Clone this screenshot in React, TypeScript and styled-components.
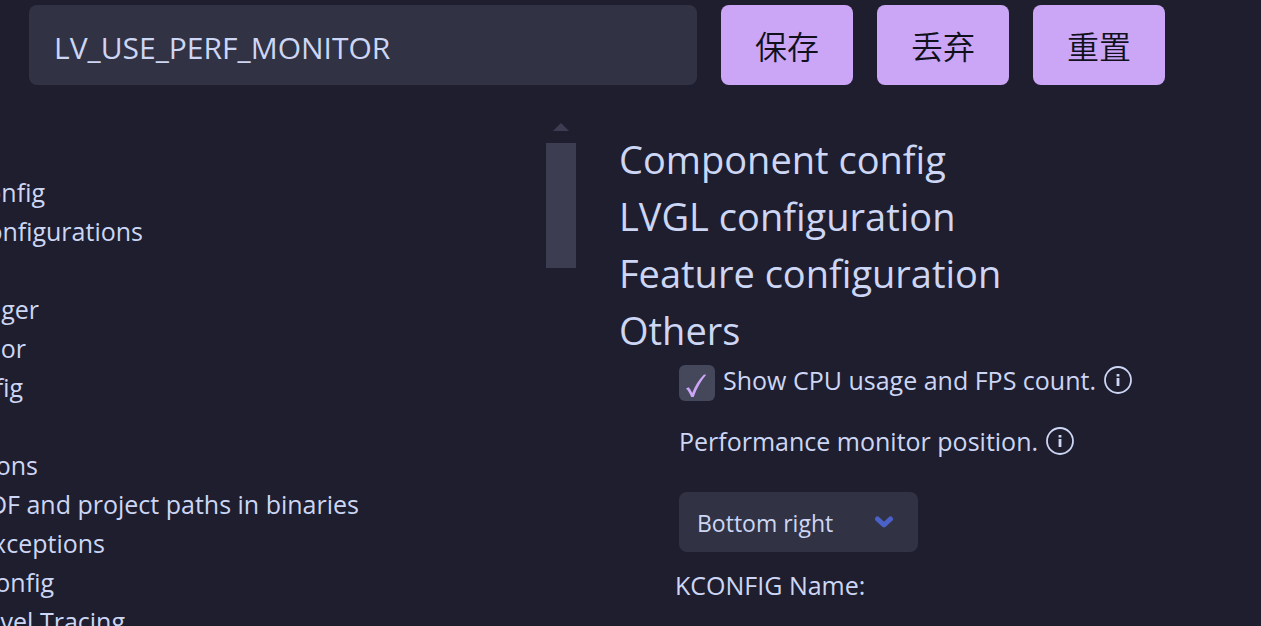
import React from "react";
import styled, { createGlobalStyle } from "styled-components";

const GlobalStyle = createGlobalStyle`
  * { box-sizing: border-box; }
  body {
    margin: 0;
    overflow: hidden;
    background: #1e1e2e;
    color: #cdd6f4;
    font-family: "Open Sans", "Noto Sans CJK SC", sans-serif;
    font-size: 25px;
    line-height: 39px;
  }
`;

const Page = styled.div`
  display: flex;
  flex-direction: column;
  height: 100vh;
`;

const Toolbar = styled.header`
  display: flex;
  gap: 24px;
  padding: 5px 96px 0 29px;
`;

const SearchInput = styled.input`
  flex: 1;
  min-width: 0;
  height: 80px;
  padding: 4px 24px 0 25px;
  border: 0;
  border-radius: 8px;
  outline: 0;
  background: #313244;
  color: inherit;
  font-family: inherit;
  font-size: 30px;
`;

const ActionButton = styled.button`
  width: 132px;
  height: 80px;
  padding: 0;
  border: 0;
  border-radius: 8px;
  background: #cba6f7;
  color: #11111b;
  font-family: "Noto Sans CJK SC", sans-serif;
  font-size: 32px;
  font-weight: 350;
`;

const Body = styled.div`
  display: flex;
  flex: 1;
  min-height: 0;
  padding-top: 32px;
`;

const Sidebar = styled.aside`
  display: flex;
  flex: 0 0 576px;
  min-height: 0;
  overflow: hidden;
`;

const Tree = styled.ul`
  flex: 1;
  min-width: 0;
  margin: 0;
  padding: 56px 0 0;
  list-style: none;
  white-space: nowrap;
`;

const TreeItem = styled.li<{ $reach: number }>`
  display: flex;
  justify-content: flex-end;
  width: ${(p) => p.$reach}px;
  height: 39px;
`;

const ScrollTrack = styled.div`
  display: flex;
  flex-direction: column;
  align-items: center;
  gap: 12px;
  width: 30px;
  padding-top: 6px;
`;

const ScrollArrow = styled.svg`
  display: block;
  width: 16px;
  height: 8px;
  fill: #3d3d51;
`;

const ScrollThumb = styled.div`
  width: 100%;
  height: 125px;
  background: #3d3d51;
`;

const Content = styled.main`
  flex: 1;
  min-width: 0;
  padding: 14px 0 0 43px;
`;

const Heading = styled.h2`
  margin: 0;
  font-size: 38px;
  font-weight: 400;
  line-height: 57px;
  white-space: nowrap;
`;

const Settings = styled.div`
  padding: 6px 0 0 60px;
`;

const OptionRow = styled.div`
  display: flex;
  align-items: flex-start;
  height: 61px;
  white-space: nowrap;
`;

const OptionLabel = styled.label`
  line-height: 30px;
`;

const CheckWrap = styled.span`
  display: grid;
  width: 36px;
  height: 36px;
  margin-right: 8px;

  > * { grid-area: 1 / 1; }
`;

const Checkbox = styled.input`
  width: 36px;
  height: 36px;
  margin: 0;
  appearance: none;
  border-radius: 6px;
  background: #45475a;
`;

const CheckMark = styled.svg`
  z-index: 1;
  width: 36px;
  height: 36px;
  fill: #cba6f7;
  pointer-events: none;

  input:not(:checked) + & { visibility: hidden; }
`;

const InfoButton = styled.button`
  display: flex;
  margin: 0 0 0 7px;
  padding: 0;
  border: 0;
  background: none;
  color: inherit;
`;

const SelectWrap = styled.div`
  display: grid;
  align-items: center;
  width: 239px;
  margin-top: 5px;

  > * { grid-area: 1 / 1; }
`;

const Select = styled.select`
  width: 100%;
  height: 60px;
  padding: 2px 18px 0;
  appearance: none;
  border: 0;
  border-radius: 8px;
  background: #313244;
  color: inherit;
  font-family: inherit;
  font-size: 23px;
`;

const Chevron = styled.svg`
  justify-self: end;
  width: 20px;
  height: 14px;
  margin-right: 24px;
  fill: none;
  stroke: #4a62c8;
  stroke-width: 5;
  stroke-linecap: round;
  stroke-linejoin: round;
  pointer-events: none;
`;

const KconfigName = styled.p`
  margin: 14px 0 0 -4px;
`;

const treeItems = [
  { label: "onfig", reach: 45 },
  { label: "onfigurations", reach: 143 },
  { label: "", reach: 0 },
  { label: "ger", reach: 39 },
  { label: "ior", reach: 26 },
  { label: "fig", reach: 23 },
  { label: "", reach: 0 },
  { label: "ons", reach: 38 },
  { label: "DF and project paths in binaries", reach: 359 },
  { label: "xceptions", reach: 105 },
  { label: "onfig", reach: 54 },
  { label: "evel Tracing", reach: 125 },
];

const headings = ["Component config", "LVGL configuration", "Feature configuration", "Others"];

function Info() {
  return (
    <InfoButton type="button" aria-label="Help">
      <svg width="30" height="30" viewBox="0 0 30 30" fill="none">
        <circle cx="15" cy="15" r="13" stroke="currentColor" strokeWidth="1.8" />
        <path d="M13.6 9h2.8v2.4h-2.8zM13.6 13h2.8v8h-2.8z" fill="currentColor" />
      </svg>
    </InfoButton>
  );
}

export default function App() {
  return (
    <Page>
      <GlobalStyle />
      <Toolbar>
        <SearchInput aria-label="Search" defaultValue="LV_USE_PERF_MONITOR" />
        <ActionButton type="button">保存</ActionButton>
        <ActionButton type="button">丢弃</ActionButton>
        <ActionButton type="button">重置</ActionButton>
      </Toolbar>
      <Body>
        <Sidebar>
          <Tree>
            {treeItems.map((item, i) => (
              <TreeItem key={i} $reach={item.reach}>{item.label}</TreeItem>
            ))}
          </Tree>
          <ScrollTrack>
            <ScrollArrow viewBox="0 0 16 8"><path d="M8 0l8 8H0z" /></ScrollArrow>
            <ScrollThumb />
          </ScrollTrack>
        </Sidebar>
        <Content>
          {headings.map((text) => <Heading key={text}>{text}</Heading>)}
          <Settings>
            <OptionRow>
              <CheckWrap>
                <Checkbox id="perf" type="checkbox" defaultChecked />
                <CheckMark viewBox="0 0 36 36">
                  <path d="M7 23.5l2.6-1.2c1.5 1.6 2.5 3.5 3.6 5.6C16.4 20.5 19.8 14.6 25 9.5l2.2.3C22.4 15.6 18 22.6 14.7 32h-2.5C11 28.800 9.300 25.800 7 23.500z" />
                </CheckMark>
              </CheckWrap>
              <OptionLabel htmlFor="perf">Show CPU usage and FPS count.</OptionLabel>
              <Info />
            </OptionRow>
            <OptionRow>
              <OptionLabel htmlFor="position">Performance monitor position.</OptionLabel>
              <Info />
            </OptionRow>
            <SelectWrap>
              <Select id="position" defaultValue="Bottom right">
                <option>Bottom right</option>
              </Select>
              <Chevron viewBox="0 0 20 14"><path d="M3.5 4l6.5 6 6.5-6" /></Chevron>
            </SelectWrap>
            <KconfigName>KCONFIG Name:</KconfigName>
          </Settings>
        </Content>
      </Body>
    </Page>
  );
}
